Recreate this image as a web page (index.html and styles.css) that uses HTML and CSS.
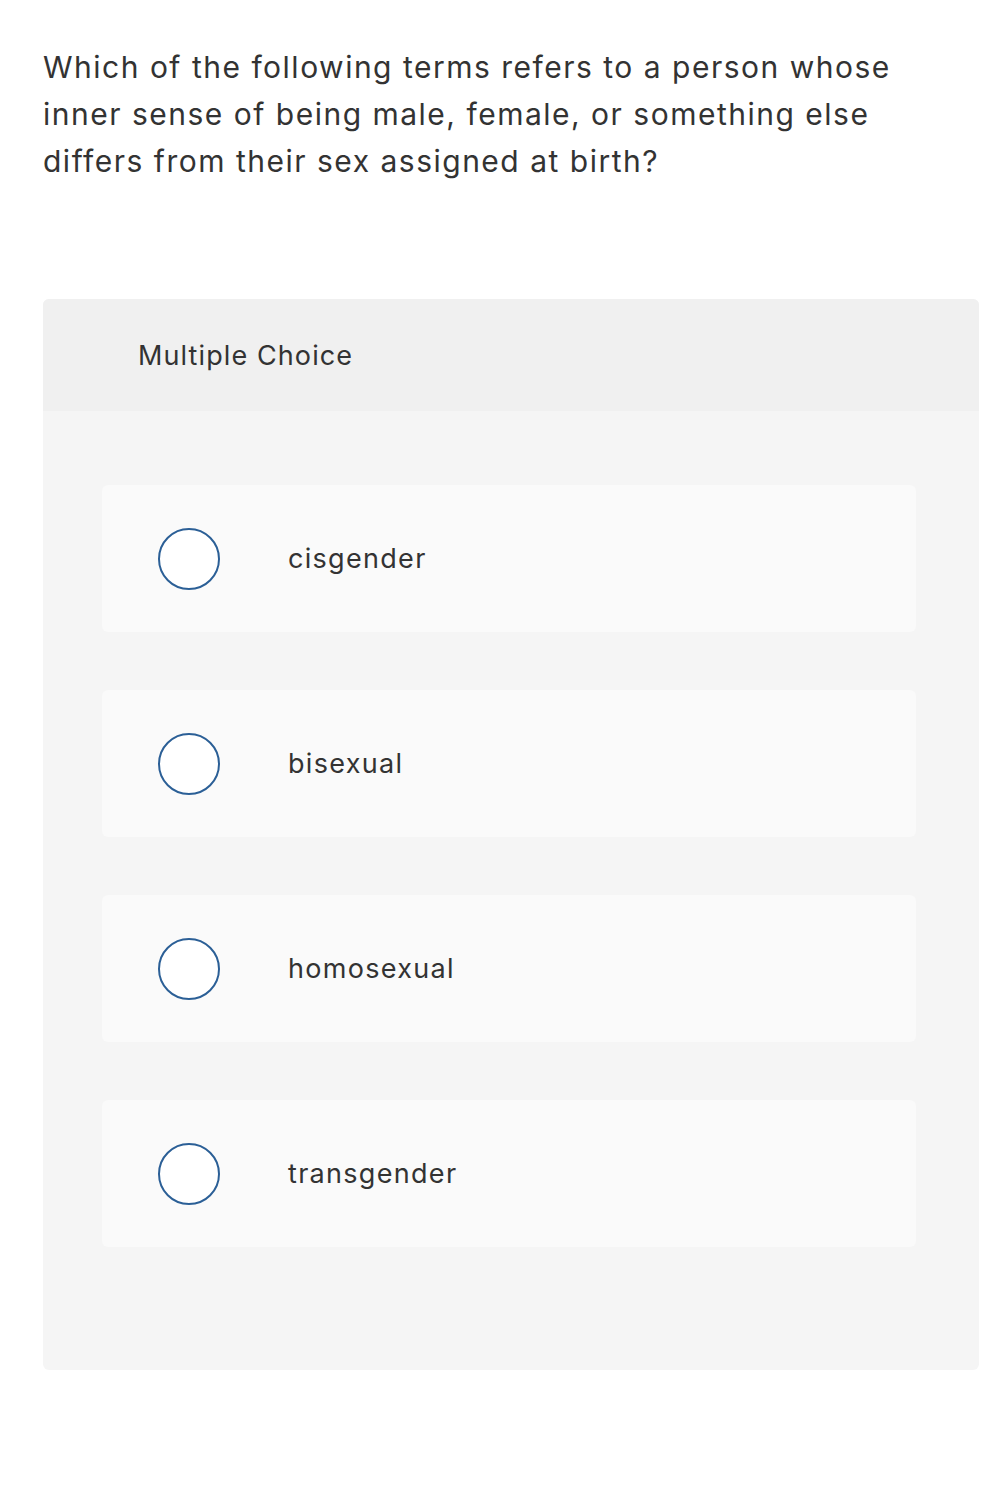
FILE: index.html
```html
<!DOCTYPE html>
<html lang="en">
<head>
    <meta charset="UTF-8">
    <meta name="viewport" content="width=device-width, initial-scale=1.0">
    <title>Question</title>
    <link rel="stylesheet" href="styles.css">
</head>
<body>
    <div class="question">
        <p class="prompt">Which of the following terms refers to a person whose inner sense of being male, female, or something else differs from their sex assigned at birth?</p>

        <div class="choice-panel">
            <div class="choice-header">Multiple Choice</div>
            <div class="choice-list">
                <label class="choice">
                    <span class="radio"></span>
                    <span class="choice-text">cisgender</span>
                </label>
                <label class="choice">
                    <span class="radio"></span>
                    <span class="choice-text">bisexual</span>
                </label>
                <label class="choice">
                    <span class="radio"></span>
                    <span class="choice-text">homosexual</span>
                </label>
                <label class="choice">
                    <span class="radio"></span>
                    <span class="choice-text">transgender</span>
                </label>
            </div>
        </div>
    </div>
</body>
</html>
```

FILE: styles.css
```css
body {
    font-family: Inter, Lato, Arial, sans-serif;
    background-color: white;
    color: #333;
    margin: 0;
}

.question {
    padding: 44px 19px 0 43px;
}

.prompt {
    margin: 0;
    font-size: 30px;
    line-height: 47px;
    letter-spacing: 1.5px;
    color: #333;
    max-width: 880px;
}

.choice-panel {
    margin-top: 114px;
    background-color: #f5f5f5;
    border-radius: 6px;
    overflow: hidden;
}

.choice-header {
    background-color: #f0f0f0;
    height: 112px;
    display: flex;
    align-items: center;
    padding-left: 95px;
    font-size: 27px;
    letter-spacing: 1.1px;
    color: #333;
}

.choice-list {
    display: flex;
    flex-direction: column;
    gap: 58px;
    padding: 74px 63px 123px 59px;
}

.choice {
    display: flex;
    align-items: center;
    height: 147px;
    background-color: #fafafa;
    border-radius: 6px;
    padding-left: 56px;
    cursor: pointer;
}

.radio {
    width: 58px;
    height: 58px;
    border: 2px solid #2b5f96;
    border-radius: 50%;
    background-color: white;
    flex-shrink: 0;
}

.choice-text {
    margin-left: 68px;
    font-size: 27px;
    letter-spacing: 1.3px;
    color: #333;
}
```
